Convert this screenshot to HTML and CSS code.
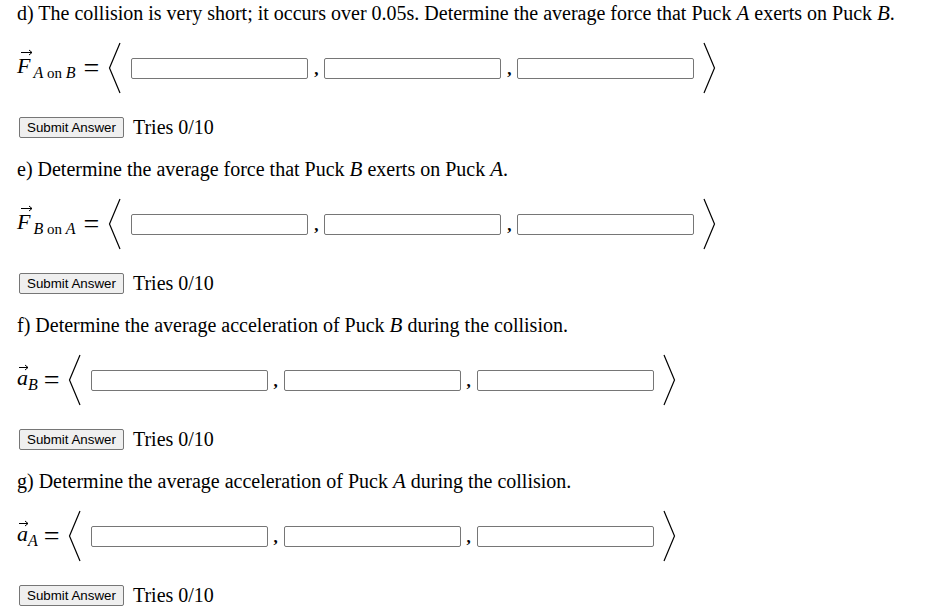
FILE: index.html
```html
<!DOCTYPE html>
<html lang="en">
<head>
  <meta charset="UTF-8">
  <meta name="viewport" content="width=device-width, initial-scale=1.0">
  <link rel="stylesheet" href="styles.css">
  <title>Collision</title>
</head>
<body>
  <div class="part">
    <p class="question">d) The collision is very short; it occurs over 0.05s. Determine the average force that Puck <span class="mi">A</span> exerts on Puck <span class="mi">B</span>.</p>
    <div class="math_row">
      <span class="vec">
        <span class="sym">F</span>
        <svg class="arrow" width="13" height="7" viewBox="0 0 13 7"><path d="M1 3.5H12M9 1L12 3.5L9 6" fill="none" stroke="#000" stroke-width="1"/></svg>
      </span>
      <span class="sub"><i>A</i> on <i>B</i></span>
      <span class="eq">=</span>
      <svg class="bracket" width="13" height="52" viewBox="0 0 13 52"><polyline points="12,1 1.5,26 12,51" fill="none" stroke="#000" stroke-width="1.2"/></svg>
      <input class="answer" type="text"><span class="comma">,</span>
      <input class="answer" type="text"><span class="comma">,</span>
      <input class="answer" type="text">
      <svg class="bracket bracket_close" width="13" height="52" viewBox="0 0 13 52"><polyline points="1,1 11.5,26 1,51" fill="none" stroke="#000" stroke-width="1.2"/></svg>
    </div>
    <div class="submit_row">
      <button class="submit">Submit Answer</button>
      <span class="tries">Tries 0/10</span>
    </div>
  </div>

  <div class="part">
    <p class="question">e) Determine the average force that Puck <span class="mi">B</span> exerts on Puck <span class="mi">A</span>.</p>
    <div class="math_row">
      <span class="vec">
        <span class="sym">F</span>
        <svg class="arrow" width="13" height="7" viewBox="0 0 13 7"><path d="M1 3.5H12M9 1L12 3.5L9 6" fill="none" stroke="#000" stroke-width="1"/></svg>
      </span>
      <span class="sub"><i>B</i> on <i>A</i></span>
      <span class="eq">=</span>
      <svg class="bracket" width="13" height="52" viewBox="0 0 13 52"><polyline points="12,1 1.5,26 12,51" fill="none" stroke="#000" stroke-width="1.2"/></svg>
      <input class="answer" type="text"><span class="comma">,</span>
      <input class="answer" type="text"><span class="comma">,</span>
      <input class="answer" type="text">
      <svg class="bracket bracket_close" width="13" height="52" viewBox="0 0 13 52"><polyline points="1,1 11.5,26 1,51" fill="none" stroke="#000" stroke-width="1.2"/></svg>
    </div>
    <div class="submit_row">
      <button class="submit">Submit Answer</button>
      <span class="tries">Tries 0/10</span>
    </div>
  </div>

  <div class="part">
    <p class="question">f) Determine the average acceleration of Puck <span class="mi">B</span> during the collision.</p>
    <div class="math_row">
      <span class="vec vec_small">
        <span class="sym">a</span>
        <svg class="arrow" width="11" height="7" viewBox="0 0 11 7"><path d="M1 3.5H10M7 1L10 3.5L7 6" fill="none" stroke="#000" stroke-width="1"/></svg>
      </span>
      <span class="sub"><i>B</i></span>
      <span class="eq">=</span>
      <svg class="bracket" width="13" height="52" viewBox="0 0 13 52"><polyline points="12,1 1.5,26 12,51" fill="none" stroke="#000" stroke-width="1.2"/></svg>
      <input class="answer" type="text"><span class="comma">,</span>
      <input class="answer" type="text"><span class="comma">,</span>
      <input class="answer" type="text">
      <svg class="bracket bracket_close" width="13" height="52" viewBox="0 0 13 52"><polyline points="1,1 11.5,26 1,51" fill="none" stroke="#000" stroke-width="1.2"/></svg>
    </div>
    <div class="submit_row">
      <button class="submit">Submit Answer</button>
      <span class="tries">Tries 0/10</span>
    </div>
  </div>

  <div class="part">
    <p class="question">g) Determine the average acceleration of Puck <span class="mi">A</span> during the collision.</p>
    <div class="math_row">
      <span class="vec vec_small">
        <span class="sym">a</span>
        <svg class="arrow" width="11" height="7" viewBox="0 0 11 7"><path d="M1 3.5H10M7 1L10 3.5L7 6" fill="none" stroke="#000" stroke-width="1"/></svg>
      </span>
      <span class="sub"><i>A</i></span>
      <span class="eq">=</span>
      <svg class="bracket" width="13" height="52" viewBox="0 0 13 52"><polyline points="12,1 1.5,26 12,51" fill="none" stroke="#000" stroke-width="1.2"/></svg>
      <input class="answer" type="text"><span class="comma">,</span>
      <input class="answer" type="text"><span class="comma">,</span>
      <input class="answer" type="text">
      <svg class="bracket bracket_close" width="13" height="52" viewBox="0 0 13 52"><polyline points="1,1 11.5,26 1,51" fill="none" stroke="#000" stroke-width="1.2"/></svg>
    </div>
    <div class="submit_row">
      <button class="submit">Submit Answer</button>
      <span class="tries">Tries 0/10</span>
    </div>
  </div>
</body>
</html>
```

FILE: styles.css
```css
* {
  box-sizing: border-box;
}

body {
  margin: 0;
  padding: 2px 0 0 17px;
  background: #fff;
  color: #000;
  font-family: "Liberation Serif", "Times New Roman", serif;
  font-size: 20px;
  overflow: hidden;
}

.part {
  display: flex;
  flex-direction: column;
  height: 156px;
}

.question {
  margin: 0;
  height: 23px;
  line-height: 23px;
  white-space: nowrap;
}

.mi {
  font-style: italic;
  font-size: 21px;
}

.math_row {
  display: flex;
  align-items: center;
  height: 52px;
  margin-top: 17px;
}

.vec {
  position: relative;
  font-style: italic;
  font-size: 22px;
  line-height: 22px;
  margin-top: -4px;
}

.vec .arrow {
  position: absolute;
  top: -6px;
  left: 3px;
}

.vec_small .arrow {
  top: -3px;
  left: 1px;
}

.sub {
  font-size: 15px;
  margin-top: 10px;
  margin-left: 3px;
}

.sub i {
  font-size: 16px;
}

.eq {
  font-size: 28px;
  line-height: 28px;
  margin: 0 9px 0 8px;
}

.vec_small + .sub {
  margin-left: 0;
}

.vec_small ~ .eq {
  margin: 0 8px 0 6px;
}

.bracket {
  margin-right: 10px;
}

.bracket_close {
  margin: 0 0 0 9px;
}

.answer {
  width: 177px;
  height: 21px;
  border: 1px solid #767676;
  border-radius: 2px;
  padding: 1px 2px;
  background: #fff;
  font: 13.33px "Liberation Sans", Arial, sans-serif;
}

.comma {
  width: 16px;
  text-align: center;
  font-size: 17px;
  margin-top: 3px;
  font-weight: bold;
}

.submit_row {
  display: flex;
  align-items: center;
  margin-top: 23px;
  padding-left: 2px;
}

.submit {
  height: 21px;
  padding: 0 7px;
  border: 1px solid #767676;
  border-radius: 2px;
  background: #efefef;
  color: #000;
  font: 13.33px "Liberation Sans", Arial, sans-serif;
}

.tries {
  margin-left: 9px;
  line-height: 21px;
}
```
